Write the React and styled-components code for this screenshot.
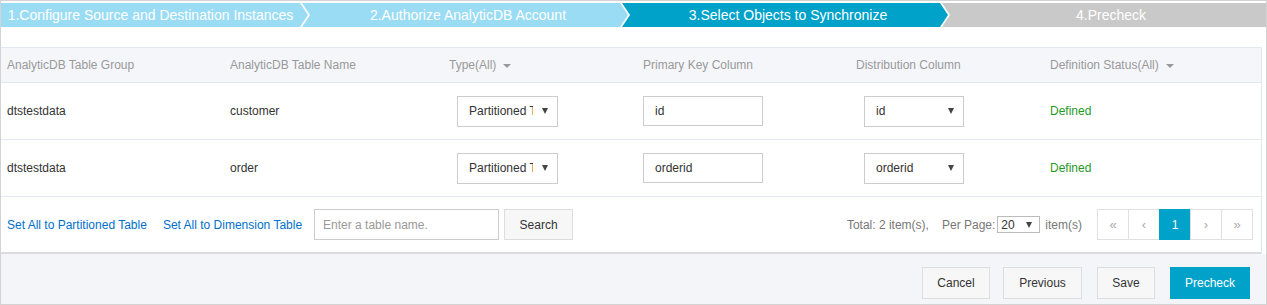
import styled, { createGlobalStyle, css } from "styled-components";

const GlobalStyle = createGlobalStyle`
  html, body {
    margin: 0;
    padding: 0;
    background: #fff;
  }
  body {
    font-family: "Liberation Sans", Arial, sans-serif;
    font-size: 12px;
    color: #333;
  }
  * {
    box-sizing: border-box;
  }
`;

const stepColors = {
  done: "#9bdcf5",
  active: "#00a2ca",
  todo: "#c9c9c9",
};

const Page = styled.div`
  width: 1267px;
  height: 305px;
  border: 1px solid #d3d3d3;
  padding-top: 2px;
  display: flex;
  flex-direction: column;
`;

const Steps = styled.div`
  display: grid;
  grid-template-columns: 299px 320px 320px 1fr;
  height: 24px;
  overflow: hidden;
`;

const Step = styled.div`
  position: relative;
  z-index: ${(p) => 10 - p.$index};
  display: flex;
  align-items: center;
  justify-content: center;
  padding-left: ${(p) => (p.$index === 0 ? 0 : 16)}px;
  background: ${(p) => stepColors[p.$state]};
  color: #fff;
  font-size: 14px;
  white-space: nowrap;

  ${(p) =>
    !p.$last &&
    css`
      &::before {
        content: "";
        position: absolute;
        left: 100%;
        top: -3px;
        border-top: 15px solid transparent;
        border-bottom: 15px solid transparent;
        border-left: 10px solid #fff;
      }
      &::after {
        content: "";
        position: absolute;
        left: 100%;
        top: 0;
        border-top: 12px solid transparent;
        border-bottom: 12px solid transparent;
        border-left: 8px solid ${stepColors[p.$state]};
      }
    `}
`;

const TableBox = styled.div`
  margin-top: 20px;
  margin-right: 4px;
  border-top: 1px solid #e3e8ee;
  border-right: 1px solid #e3e8ee;
`;

const columns = "223px 219px 194px 213px 194px 1fr";

const HeaderRow = styled.div`
  display: grid;
  grid-template-columns: ${columns};
  height: 35px;
  background: #f5f6fa;
  border-bottom: 1px solid #e3e8ee;
`;

const HeaderCell = styled.div`
  display: flex;
  align-items: center;
  padding-left: 6px;
  color: #999;
`;

const SortCaret = styled.span`
  margin-left: 7px;
  margin-top: 2px;
  border-left: 4px solid transparent;
  border-right: 4px solid transparent;
  border-top: 4px solid #999;
`;

const Row = styled.div`
  display: grid;
  grid-template-columns: ${columns};
  height: 57px;
  border-bottom: 1px solid #e3e8ee;
`;

const Cell = styled.div`
  display: flex;
  align-items: center;
  padding-left: 6px;
  color: ${(p) => (p.$ok ? "#1f9a1f" : "#333")};
`;

const SelectBox = styled.div`
  display: flex;
  align-items: center;
  width: ${(p) => p.$width}px;
  height: 31px;
  margin-left: 8px;
  padding: 0 9px 0 11px;
  border: 1px solid #ccc;
  background: #fff;
`;

const SelectText = styled.span`
  width: ${(p) => (p.$clip ? `${p.$clip}px` : "auto")};
  overflow: hidden;
  white-space: nowrap;
`;

const Arrow = styled.span`
  margin-left: auto;
  border-left: 3px solid transparent;
  border-right: 3px solid transparent;
  border-top: 6px solid #444;
`;

const TextInput = styled.div`
  display: flex;
  align-items: center;
  width: 120px;
  height: 30px;
  padding-left: 11px;
  border: 1px solid #ccc;
  background: #fff;
`;

const Toolbar = styled.div`
  display: flex;
  align-items: center;
  height: 57px;
  padding: 0 8px 0 6px;
  border-bottom: 2px solid #dcdcdc;
`;

const Link = styled.a`
  color: #0070cc;
  text-decoration: none;
  margin-right: ${(p) => p.$gap}px;
  white-space: nowrap;
`;

const SearchInput = styled.div`
  display: flex;
  align-items: center;
  width: 185px;
  height: 31px;
  padding-left: 8px;
  border: 1px solid #ccc;
  color: #999;
`;

const Button = styled.button`
  width: ${(p) => p.$width}px;
  height: ${(p) => p.$height || 31}px;
  padding: 0;
  margin-left: ${(p) => p.$gap || 0}px;
  font-family: inherit;
  font-size: 12px;
  color: ${(p) => (p.$primary ? "#fff" : "#333")};
  background: ${(p) => (p.$primary ? "#00a2ca" : "#f7f7f7")};
  border: 1px solid ${(p) => (p.$primary ? "#00a2ca" : "#ddd")};
  cursor: pointer;
`;

const Summary = styled.div`
  margin-left: auto;
  display: flex;
  align-items: center;
  color: #777;
  white-space: nowrap;
`;

const TotalText = styled.span`
  margin-right: 13px;
`;

const PerPage = styled.div`
  display: flex;
  align-items: center;
  width: 43px;
  height: 17px;
  margin: 0 5px 0 2px;
  padding: 0 7px 0 3px;
  border: 1px solid #bbb;
  color: #333;
`;

const Pager = styled.div`
  display: flex;
  margin-left: 16px;
`;

const PageButton = styled.div`
  display: flex;
  align-items: center;
  justify-content: center;
  width: 32px;
  height: 31px;
  margin-left: -1px;
  border: 1px solid ${(p) => (p.$active ? "#00a2ca" : "#e0e0e0")};
  background: ${(p) => (p.$active ? "#00a2ca" : "#fff")};
  color: ${(p) => (p.$active ? "#fff" : "#aaa")};
  font-size: ${(p) => (p.$active ? 12 : 13)}px;
`;

const Footer = styled.div`
  flex: 1;
  display: flex;
  justify-content: flex-end;
  align-items: flex-start;
  padding: 13px 16px 0 0;
  background: #f4f5f9;
`;

const steps = [
  { label: "1.Configure Source and Destination Instances", state: "done" },
  { label: "2.Authorize AnalyticDB Account", state: "done" },
  { label: "3.Select Objects to Synchronize", state: "active" },
  { label: "4.Precheck", state: "todo" },
];

const rows = [
  { group: "dtstestdata", name: "customer", key: "id", dist: "id" },
  { group: "dtstestdata", name: "order", key: "orderid", dist: "orderid" },
];

export default function App() {
  return (
    <>
      <GlobalStyle />
      <Page>
        <Steps>
          {steps.map((s, i) => (
            <Step key={s.label} $index={i} $state={s.state} $last={i === steps.length - 1}>
              {s.label}
            </Step>
          ))}
        </Steps>

        <TableBox>
          <HeaderRow>
            <HeaderCell>AnalyticDB Table Group</HeaderCell>
            <HeaderCell>AnalyticDB Table Name</HeaderCell>
            <HeaderCell>
              Type(All)
              <SortCaret />
            </HeaderCell>
            <HeaderCell>Primary Key Column</HeaderCell>
            <HeaderCell>Distribution Column</HeaderCell>
            <HeaderCell>
              Definition Status(All)
              <SortCaret />
            </HeaderCell>
          </HeaderRow>

          {rows.map((r) => (
            <Row key={r.name}>
              <Cell>{r.group}</Cell>
              <Cell>{r.name}</Cell>
              <Cell>
                <SelectBox $width={101}>
                  <SelectText $clip={64}>Partitioned Table</SelectText>
                  <Arrow />
                </SelectBox>
              </Cell>
              <Cell>
                <TextInput>{r.key}</TextInput>
              </Cell>
              <Cell>
                <SelectBox $width={100}>
                  <SelectText>{r.dist}</SelectText>
                  <Arrow />
                </SelectBox>
              </Cell>
              <Cell $ok>Defined</Cell>
            </Row>
          ))}

          <Toolbar>
            <Link href="#" $gap={16}>Set All to Partitioned Table</Link>
            <Link href="#" $gap={12}>Set All to Dimension Table</Link>
            <SearchInput>Enter a table name.</SearchInput>
            <Button $width={69} $gap={5}>Search</Button>
            <Summary>
              <TotalText>Total: 2 item(s),</TotalText>
              Per Page:
              <PerPage>
                20
                <Arrow />
              </PerPage>
              item(s)
              <Pager>
                <PageButton>«</PageButton>
                <PageButton>‹</PageButton>
                <PageButton $active>1</PageButton>
                <PageButton>›</PageButton>
                <PageButton>»</PageButton>
              </Pager>
            </Summary>
          </Toolbar>
        </TableBox>

        <Footer>
          <Button $width={68} $height={32}>Cancel</Button>
          <Button $width={79} $height={32} $gap={13}>Previous</Button>
          <Button $width={58} $height={32} $gap={15}>Save</Button>
          <Button $width={80} $height={32} $gap={15} $primary>Precheck</Button>
        </Footer>
      </Page>
    </>
  );
}
